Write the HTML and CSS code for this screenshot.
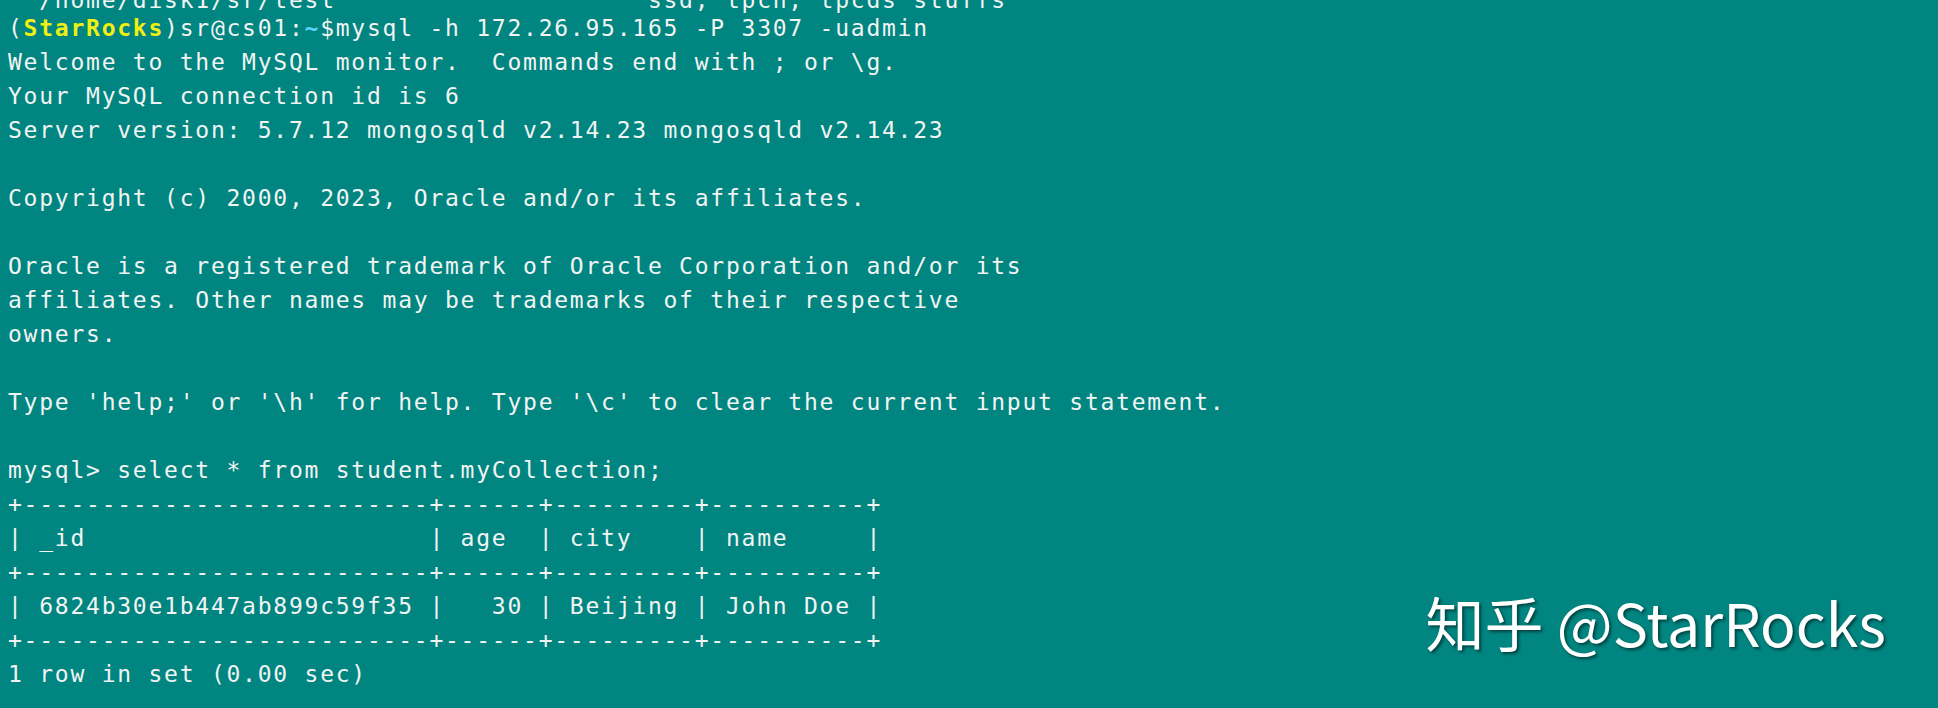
FILE: index.html
```html
<!DOCTYPE html>
<html lang="en">
<head>
<meta charset="utf-8">
<title>Terminal</title>
<link rel="stylesheet" href="styles.css">
</head>
<body>
<main class="term">
<div class="line0">  /home/disk1/sr/test                    ssd, tpch, tpcds stuffs</div>
<pre class="out">(<span class="env">StarRocks</span>)sr@cs01:<span class="tilde">~</span>$mysql -h 172.26.95.165 -P 3307 -uadmin
Welcome to the MySQL monitor.  Commands end with ; or \g.
Your MySQL connection id is 6
Server version: 5.7.12 mongosqld v2.14.23 mongosqld v2.14.23

Copyright (c) 2000, 2023, Oracle and/or its affiliates.

Oracle is a registered trademark of Oracle Corporation and/or its
affiliates. Other names may be trademarks of their respective
owners.

Type 'help;' or '\h' for help. Type '\c' to clear the current input statement.

mysql&gt; select * from student.myCollection;
+--------------------------+------+---------+----------+
| _id                      | age  | city    | name     |
+--------------------------+------+---------+----------+
| 6824b30e1b447ab899c59f35 |   30 | Beijing | John Doe |
+--------------------------+------+---------+----------+
1 row in set (0.00 sec)
</pre>
</main>
<div class="watermark">知乎 @StarRocks</div>
</body>
</html>
```

FILE: styles.css
```css
html, body {
  margin: 0;
  padding: 0;
}
body {
  width: 1938px;
  height: 708px;
  overflow: hidden;
  background: #008580;
  position: relative;
}
.term {
  padding-left: 8px;
  font-family: "DejaVu Sans Mono", "Liberation Mono", monospace;
  font-size: 23px;
  letter-spacing: 1.76px;
  color: #f2f4f3;
}
.line0 {
  white-space: pre;
  line-height: 34px;
  height: 28px;
  margin-top: -17px;
}
.out {
  margin: 0;
  font: inherit;
  line-height: 34px;
  white-space: pre;
}
.env {
  color: #f0f010;
  font-weight: bold;
}
.tilde {
  color: #5cd2f5;
  font-weight: bold;
}
.watermark {
  position: absolute;
  right: 52px;
  top: 592px;
  font-family: "Noto Sans CJK SC", "Noto Sans", sans-serif;
  font-size: 59px;
  line-height: 1;
  color: #ffffff;
  text-shadow: 2px 2px 3px rgba(0, 40, 40, 0.7);
}
```
